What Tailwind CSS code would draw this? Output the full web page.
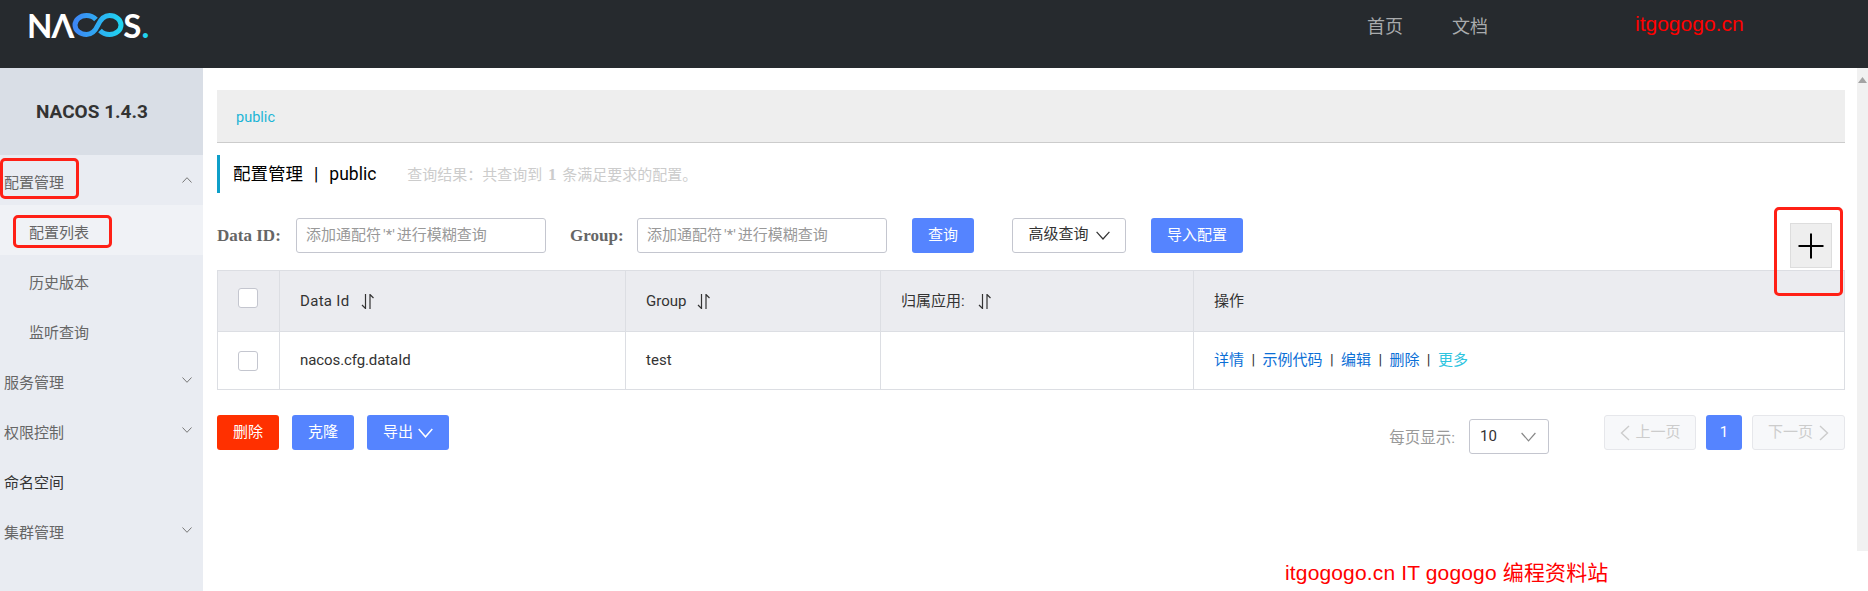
<!DOCTYPE html>
<html lang="zh-CN">
<head>
    <meta charset="utf-8">
    <title>Nacos 配置管理</title>
    <script src="https://cdn.jsdelivr.net/npm/@tailwindcss/browser@4"></script>
</head>
<body class="bg-white">
<div class="relative w-[1868px] h-[591px] overflow-hidden font-['Roboto','Noto_Sans_CJK_SC',sans-serif] text-[15px] text-[#333]">

    <!-- top bar -->
    <header class="flex h-[68px] bg-[#262a2e]">
        <div class="flex items-start w-[160px] pl-[27px] pt-[7px] h-[40px] text-white font-['Lato','Noto_Sans',sans-serif] font-bold text-[33px] leading-[36px]">
            <span class="tracking-[-1px]">NΛ</span>
            <svg class="w-[52px] h-[24px] mt-[6px] -ml-[1px] shrink-0" viewBox="0 0 52 24" fill="none">
                <defs>
                    <linearGradient id="logoGrad" x1="0" y1="0" x2="1" y2="0">
                        <stop offset="0" stop-color="#3d86f5"/>
                        <stop offset="1" stop-color="#1fd3f0"/>
                    </linearGradient>
                </defs>
                <path d="M24 6.5C21.5 3.8 18.5 2.5 14.5 2.5C8 2.5 3 6.8 3 12C3 17.2 8 21.5 14.5 21.5C20 21.5 23 18.5 26 12C29 5.5 32 2.5 37.5 2.5C44 2.5 49 6.8 49 12C49 17.2 44 21.5 37.5 21.5C33.5 21.5 30.5 20.2 28 17.5" stroke="url(#logoGrad)" stroke-width="5" stroke-linecap="butt"/>
            </svg>
            <span class="-ml-[1px]">S</span>
            <span class="text-[#22d3ee]">.</span>
        </div>
        <nav class="flex ml-[1207px] pt-[14px] gap-[49px] text-[18px] leading-[26px] text-[#a9abad]">
            <a>首页</a>
            <a>文档</a>
        </nav>
    </header>

    <div class="flex h-[523px]">
        <!-- side menu -->
        <aside class="w-[204px] bg-[#e9ecf2] text-[#666]">
            <div class="flex items-center h-[87px] pl-[36px] pt-[1px] bg-[#d9dee6] font-bold text-[19px] text-[#333]">NACOS 1.4.3</div>
            <div class="flex justify-between items-center h-[50px] pl-[4px] pr-[11px]">
                <span class="pt-[6px]">配置管理</span>
                <svg class="w-[10px] h-[6px]" viewBox="0 0 10 6" fill="none" stroke="#777" stroke-width="1"><path d="M0.5 5.5L5 0.7L9.5 5.5"/></svg>
            </div>
            <div class="flex items-center h-[50px] pl-[29px] bg-[#f0f2f6]"><span class="pt-[6px]">配置列表</span></div>
            <div class="flex items-center h-[50px] pl-[29px]"><span class="pt-[6px]">历史版本</span></div>
            <div class="flex items-center h-[50px] pl-[29px]"><span class="pt-[6px]">监听查询</span></div>
            <div class="flex justify-between items-center h-[50px] pl-[4px] pr-[11px]">
                <span class="pt-[6px]">服务管理</span>
                <svg class="w-[10px] h-[6px]" viewBox="0 0 10 6" fill="none" stroke="#777" stroke-width="1"><path d="M0.5 0.5L5 5.3L9.5 0.5"/></svg>
            </div>
            <div class="flex justify-between items-center h-[50px] pl-[4px] pr-[11px]">
                <span class="pt-[6px]">权限控制</span>
                <svg class="w-[10px] h-[6px]" viewBox="0 0 10 6" fill="none" stroke="#777" stroke-width="1"><path d="M0.5 0.5L5 5.3L9.5 0.5"/></svg>
            </div>
            <div class="flex items-center h-[50px] pl-[4px] text-[#333]"><span class="pt-[6px]">命名空间</span></div>
            <div class="flex justify-between items-center h-[50px] pl-[4px] pr-[11px]">
                <span class="pt-[6px]">集群管理</span>
                <svg class="w-[10px] h-[6px]" viewBox="0 0 10 6" fill="none" stroke="#777" stroke-width="1"><path d="M0.5 0.5L5 5.3L9.5 0.5"/></svg>
            </div>
        </aside>

        <!-- content -->
        <main class="flex-1 pt-[22px] pl-[14px] pr-[12px]">
            <div class="flex items-center h-[53px] pl-[19px] pt-[3px] bg-[#eeeeee] border-b border-[#cccccc] text-[14.5px] text-[#1cb5d6]">public</div>

            <div class="flex items-center h-[38px] mt-[12px] pl-[13px] border-l-[3px] border-[#0e9fc9] text-black text-[17.5px]">
                <span>配置管理</span>
                <span class="ml-[11px]">|</span>
                <span class="ml-[11px]">public</span>
                <span class="ml-[31px] pt-[2px] text-[15px] text-[#cccccc]">查询结果：共查询到 <b class="mx-[2px] text-[17px] font-['Liberation_Serif',serif]">1</b> 条满足要求的配置。</span>
            </div>

            <div class="flex items-center h-[35px] mt-[25px]">
                <label class="w-[79px] font-['Liberation_Serif',serif] font-bold text-[17px] text-[#666]">Data ID:</label>
                <div class="flex items-center w-[250px] h-[35px] pl-[9px] border border-[#c4c6cf] rounded-[3px] text-[#999]">添加通配符<span class="px-[2px]">'*'</span>进行模糊查询</div>
                <label class="w-[67px] ml-[24px] font-['Liberation_Serif',serif] font-bold text-[17px] text-[#666]">Group:</label>
                <div class="flex items-center w-[250px] h-[35px] pl-[9px] border border-[#c4c6cf] rounded-[3px] text-[#999]">添加通配符<span class="px-[2px]">'*'</span>进行模糊查询</div>
                <button class="w-[62px] h-[35px] ml-[25px] bg-[#5584ff] rounded-[3px] text-white">查询</button>
                <button class="flex items-center justify-center gap-[7px] w-[114px] h-[35px] ml-[38px] border border-[#c4c6cf] rounded-[3px] text-[#333]">
                    <span class="-mt-[3px]">高级查询</span>
                    <svg class="w-[14px] h-[9px]" viewBox="0 0 14 9" fill="none" stroke="#333" stroke-width="1.2"><path d="M0.6 0.8L7 8L13.4 0.8"/></svg>
                </button>
                <button class="w-[92px] h-[35px] ml-[25px] bg-[#5584ff] rounded-[3px] text-white">导入配置</button>
                <button class="flex items-center justify-center self-start w-[42px] h-[45px] ml-auto mr-[13px] mt-[5px] shrink-0 bg-[#eeeeee] border border-[#dddddd]">
                    <svg class="w-[26px] h-[26px]" viewBox="0 0 26 26" fill="none" stroke="#000" stroke-width="2"><path d="M0.5 13H25.5M13 0.5V25.5"/></svg>
                </button>
            </div>

            <table class="w-[1627px] mt-[17px] table-fixed border-collapse border border-[#dcdee3]">
                <colgroup>
                    <col class="w-[62px]"><col class="w-[346px]"><col class="w-[255px]"><col class="w-[313px]"><col class="w-[651px]">
                </colgroup>
                <thead>
                    <tr class="h-[61px] bg-[#ebecf0] text-left font-normal">
                        <th class="border border-[#dcdee3] pb-[7px] pl-[20px]"><span class="block w-[20px] h-[20px] bg-white border border-[#c4c6cf] rounded-[3px]"></span></th>
                        <th class="border border-[#dcdee3] pl-[20px] font-normal text-[#333]">
                            <span class="flex items-center gap-[12px]"><span class="tracking-[0.3px]">Data Id</span>
                                <svg class="w-[13px] h-[15px]" viewBox="0 0 13 15" fill="none" stroke="#333" stroke-width="1.2"><path d="M4.5 0V14.5L1 11M9 15V0.5L12.5 4"/></svg>
                            </span>
                        </th>
                        <th class="border border-[#dcdee3] pl-[20px] font-normal text-[#333]">
                            <span class="flex items-center gap-[11px]">Group
                                <svg class="w-[13px] h-[15px]" viewBox="0 0 13 15" fill="none" stroke="#333" stroke-width="1.2"><path d="M4.5 0V14.5L1 11M9 15V0.5L12.5 4"/></svg>
                            </span>
                        </th>
                        <th class="border border-[#dcdee3] pl-[20px] font-normal text-[#333]">
                            <span class="flex items-center gap-[13px]">归属应用:
                                <svg class="w-[13px] h-[15px]" viewBox="0 0 13 15" fill="none" stroke="#333" stroke-width="1.2"><path d="M4.5 0V14.5L1 11M9 15V0.5L12.5 4"/></svg>
                            </span>
                        </th>
                        <th class="border border-[#dcdee3] pl-[20px] font-normal text-[#333]">操作</th>
                    </tr>
                </thead>
                <tbody>
                    <tr class="h-[58px]">
                        <td class="border border-[#dcdee3] pl-[20px]"><span class="block w-[20px] h-[20px] bg-white border border-[#c4c6cf] rounded-[3px]"></span></td>
                        <td class="border border-[#dcdee3] pl-[20px] tracking-[-0.1px]">nacos.cfg.dataId</td>
                        <td class="border border-[#dcdee3] pl-[20px]">test</td>
                        <td class="border border-[#dcdee3]"></td>
                        <td class="border border-[#dcdee3] pl-[20px]">
                            <span class="flex items-center gap-[7.4px] text-[#0b6fd6]">
                                <a>详情</a><span class="text-[#333]">|</span>
                                <a>示例代码</a><span class="text-[#333]">|</span>
                                <a>编辑</a><span class="text-[#333]">|</span>
                                <a>删除</a><span class="text-[#333]">|</span>
                                <a class="text-[#2fc5df]">更多</a>
                            </span>
                        </td>
                    </tr>
                </tbody>
            </table>

            <div class="flex items-start mt-[25px]">
                <button class="w-[62px] h-[35px] bg-[#ff3000] rounded-[3px] text-white">删除</button>
                <button class="w-[62px] h-[35px] ml-[13px] bg-[#5584ff] rounded-[3px] text-white">克隆</button>
                <button class="flex items-center justify-center gap-[5px] w-[82px] h-[35px] ml-[13px] bg-[#5584ff] rounded-[3px] text-white">
                    导出
                    <svg class="w-[15px] h-[10px]" viewBox="0 0 15 10" fill="none" stroke="#fff" stroke-width="1.5"><path d="M0.7 1L7.5 8.8L14.3 1"/></svg>
                </button>

                <span class="ml-auto mr-[14px] mt-[11px] h-[24px] leading-[24px] text-[15.5px] text-[#999]">每页显示:</span>
                <div class="flex items-center justify-between w-[80px] h-[35px] mt-[4px] pl-[10px] pr-[12px] border border-[#c4c6cf] rounded-[3px] text-[#333]">
                    10
                    <svg class="w-[15px] h-[10px]" viewBox="0 0 15 10" fill="none" stroke="#888" stroke-width="1.2"><path d="M0.6 1L7.5 8.8L14.4 1"/></svg>
                </div>
                <button class="flex items-center justify-center gap-[6px] w-[92px] h-[35px] ml-[55px] bg-[#f7f8fa] border border-[#e6e7eb] rounded-[3px] text-[#cccccc]">
                    <svg class="w-[10px] h-[16px]" viewBox="0 0 10 16" fill="none" stroke="#cccccc" stroke-width="1.4"><path d="M9 1L1.5 8L9 15"/></svg>
                    上一页
                </button>
                <button class="w-[36px] h-[35px] ml-[10px] bg-[#5584ff] rounded-[3px] text-white">1</button>
                <button class="flex items-center justify-center gap-[6px] w-[93px] h-[35px] ml-[10px] bg-[#f7f8fa] border border-[#e6e7eb] rounded-[3px] text-[#cccccc]">
                    下一页
                    <svg class="w-[10px] h-[16px]" viewBox="0 0 10 16" fill="none" stroke="#cccccc" stroke-width="1.4"><path d="M1 1L8.5 8L1 15"/></svg>
                </button>
            </div>
        </main>

        <!-- scrollbar -->
        <div class="w-[11px] h-[483px] pt-[9px] pl-[1px] bg-[#f1f1f1]">
            <svg class="w-[9px] h-[6px]" viewBox="0 0 9 6" fill="#a3a3a3"><path d="M4.5 0L9 6H0Z"/></svg>
        </div>
    </div>

    <!-- red annotations drawn over the screenshot -->
    <div class="absolute left-0 top-[158px] w-[79px] h-[41px] border-[3px] border-[#ff2016] rounded-[5px]"></div>
    <div class="absolute left-[13px] top-[215px] w-[99px] h-[33px] border-[3px] border-[#ff2016] rounded-[5px]"></div>
    <div class="absolute left-[1774px] top-[207px] w-[69px] h-[89px] border-[3px] border-[#ff2016] rounded-[5px]"></div>
    <span class="absolute left-[1635px] top-[11px] font-['Liberation_Sans',sans-serif] text-[21px] leading-[26px] text-[#ff0000]">itgogogo.cn</span>
    <span class="absolute left-[1285px] top-[560px] font-['Liberation_Sans','Noto_Sans_CJK_SC',sans-serif] text-[21px] leading-[26px] tracking-[0.15px] text-[#ff0000]">itgogogo.cn IT gogogo 编程资料站</span>
</div>
</body>
</html>
